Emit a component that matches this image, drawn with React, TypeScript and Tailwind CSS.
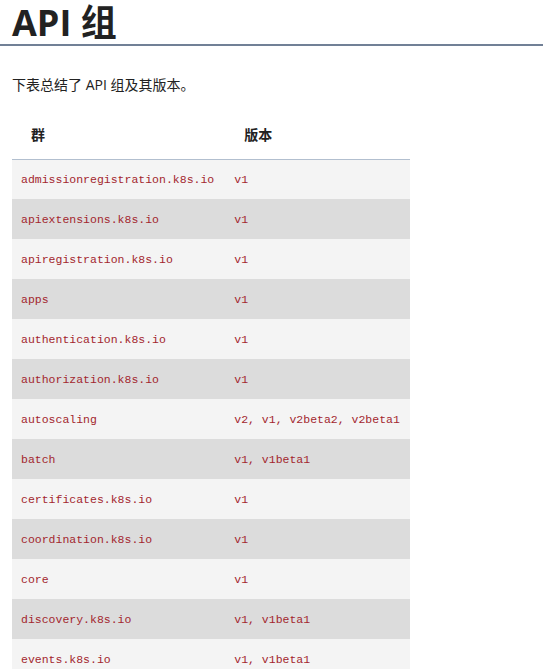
const rows: [string, string][] = [
  ['admissionregistration.k8s.io', 'v1'],
  ['apiextensions.k8s.io', 'v1'],
  ['apiregistration.k8s.io', 'v1'],
  ['apps', 'v1'],
  ['authentication.k8s.io', 'v1'],
  ['authorization.k8s.io', 'v1'],
  ['autoscaling', 'v2, v1, v2beta2, v2beta1'],
  ['batch', 'v1, v1beta1'],
  ['certificates.k8s.io', 'v1'],
  ['coordination.k8s.io', 'v1'],
  ['core', 'v1'],
  ['discovery.k8s.io', 'v1, v1beta1'],
  ['events.k8s.io', 'v1, v1beta1'],
]

const sans = "font-['Open_Sans','Noto_Sans_CJK_SC',sans-serif]"
const mono = "font-['Liberation_Mono','DejaVu_Sans_Mono',monospace] text-[11.5px] text-[#a3262e]"

export default function App() {
  return (
    <div className={`${sans} bg-white text-[#222] min-h-[669px] overflow-hidden`}>
      {/* titulo */}
      <h1 className="pl-3 pt-[2px] text-[36px] leading-[42px] font-bold border-b-2 border-[#718096]">
        API 组
      </h1>

      <p className="pl-3 mt-[29px] text-[14px] leading-[20px]">下表总结了 API 组及其版本。</p>

      <table className="ml-3 mt-[16px] border-collapse">
        <thead>
          <tr className="h-[48px] border-b border-[#b2bfcf]">
            <th className="text-left text-[14px] font-semibold pl-[19px] pr-[10px]">群</th>
            <th className="text-left text-[14px] font-semibold pl-[20px] pr-[10px]">版本</th>
          </tr>
        </thead>
        <tbody>
          {rows.map(([group, versions], i) => (
            <tr key={group} className={`h-10 ${i % 2 === 0 ? 'bg-[#f4f4f4]' : 'bg-[#dcdcdc]'}`}>
              <td className={`${mono} pl-[9px] pr-[10px] pt-[1px] whitespace-nowrap`}>{group}</td>
              <td className={`${mono} pl-[10px] pr-[10px] pt-[1px] whitespace-nowrap`}>{versions}</td>
            </tr>
          ))}
        </tbody>
      </table>
    </div>
  )
}
